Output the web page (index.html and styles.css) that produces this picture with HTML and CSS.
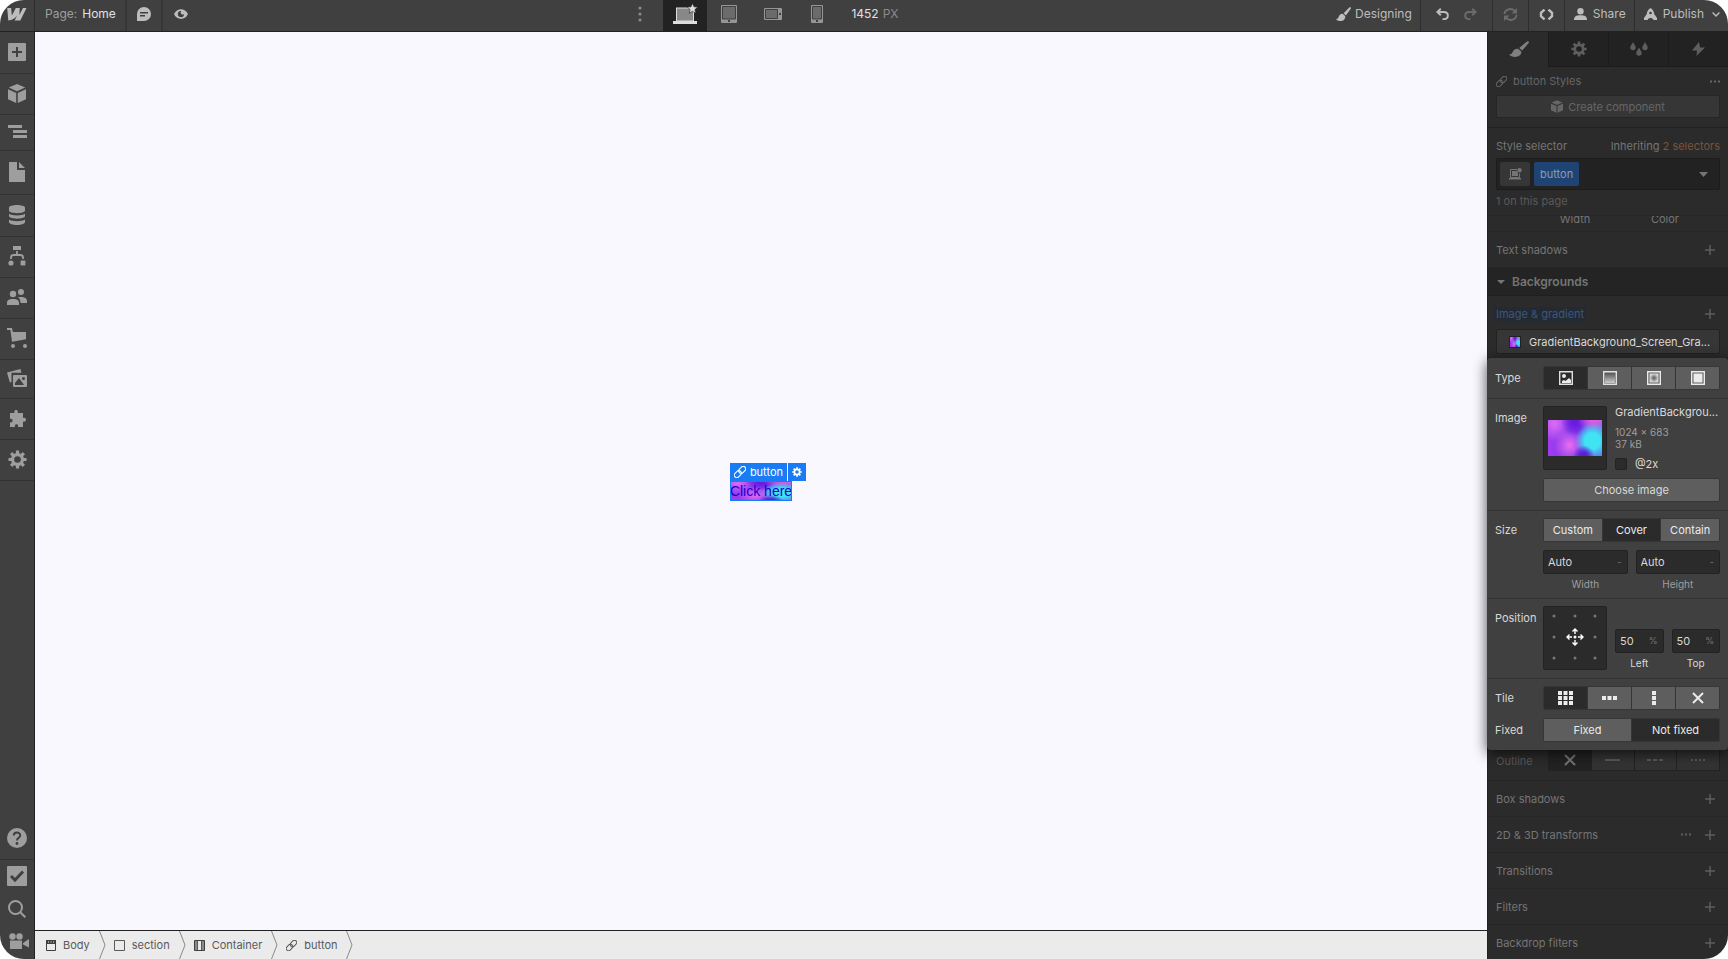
FILE: index.html
```
<!DOCTYPE html>
<html lang="en">

<head>
  <meta charset="UTF-8" />
  <meta name="viewport" content="width=device-width, initial-scale=1.0"/>
  <title>Designer - Home</title>
  <link rel="stylesheet" href="styles.css">
</head>

<body>
  <!-- Shared icons -->
  <svg class="sprite" aria-hidden="true">
    <symbol id="i-gear" viewBox="0 0 20 20">
      <circle cx="10" cy="10" r="5.2" fill="none" stroke="currentColor" stroke-width="3.4"/>
      <path d="M10 .5v4M10 15.5v4M.5 10h4M15.5 10h4M3.3 3.3l2.8 2.8M13.9 13.9l2.8 2.8M3.3 16.7l2.8-2.8M13.9 6.1l2.8-2.8" stroke="currentColor" stroke-width="3.4"/>
    </symbol>
    <symbol id="i-link" viewBox="0 0 12 12">
      <g fill="none" stroke="currentColor" stroke-width="1.1" transform="rotate(-45 6 6)">
        <rect x="-1" y="3.500" width="7.800" height="5" rx="2.500"/>
        <rect x="5.200" y="3.500" width="7.800" height="5" rx="2.500"/>
      </g>
    </symbol>
    <symbol id="i-cube" viewBox="0 0 18 19">
      <path d="M9 0l8.2 3.6L9 7.3.8 3.6zM0 5.3l8.2 3.6V19L0 15.200zM18 5.300L9.800 8.900V19l8.200-3.800z" fill="currentColor"/>
    </symbol>
    <symbol id="i-brush" viewBox="0 0 20 16">
      <path d="M19.500.4c.7.6.5 1.100.1 1.700l-6.400 7.500-3-2.500L17.700.7c.6-.6 1.200-.7 1.800-.3zM9.300 7.900l3 2.600c.4 3.300-2.800 5.500-6.300 5.500-2.500 0-4.700-.9-6-2.400 2.600 0 3-1.200 3.900-3C5 8.400 7.100 7.200 9.300 7.900z" fill="currentColor"/>
    </symbol>
    <symbol id="i-plus" viewBox="0 0 10 10">
      <path d="M5 0v10M0 5h10" stroke="currentColor" stroke-width="1.500"/>
    </symbol>
    <symbol id="i-dots" viewBox="0 0 10 3">
      <path d="M0 .5h2v2H0zM4 .5h2v2H4zM8 .5h2v2H8z" fill="currentColor"/>
    </symbol>
    <symbol id="i-cross" viewBox="0 0 12 12">
      <path d="M1 1l10 10M11 1L1 11" stroke="currentColor" stroke-width="2"/>
    </symbol>
    <symbol id="i-undo" viewBox="0 0 13 12">
      <path d="M4.800.7L1.300 4l3.500 3.300M1.500 4h6.300c5.400 0 5.400 7.200 0 7.200H6.500" fill="none" stroke="currentColor" stroke-width="1.900"/>
    </symbol>
    <linearGradient id="g-linear" x1="0" y1="0" x2="0" y2="1">
      <stop offset="0" stop-color="#555"/>
      <stop offset="1" stop-color="#ccc"/>
    </linearGradient>
    <radialGradient id="g-radial">
      <stop offset="0" stop-color="#555"/>
      <stop offset="1" stop-color="#ddd"/>
    </radialGradient>
  </svg>

  <div class="app">
    <header class="topbar">
      <div class="topbar-group">
        <button class="logo" aria-label="Menu">
          <svg width="20" height="13" viewBox="0 0 20 13"><path d="M19.500 0l-6.200 12.500H7.600l2.500-5C8 10.300 5 12.200 1.300 12.500L.2 0h3.900l.8 7.400L8.800 0h3.900l-.3 7L16 0z" fill="currentColor"/></svg>
        </button>
        <button class="page-btn">Page: <span>Home</span></button>
        <button class="icon-btn" aria-label="Comments">
          <svg width="14" height="14" viewBox="0 0 14 14"><path d="M7 0a7 7 0 0 1 0 14H0V7a7 7 0 0 1 7-7z" fill="currentColor"/><path d="M3 5.700h8M3 8.800h5" stroke="#404040" stroke-width="1.400"/></svg>
        </button>
        <button class="icon-btn" aria-label="Preview">
          <svg width="14" height="10" viewBox="0 0 14 10"><path d="M0 5c3-6.500 11-6.500 14 0-3 6.500-11 6.500-14 0z" fill="currentColor"/><path d="M7.300 2A3.100 3.100 0 1 0 10 5a2 2 0 0 1-2.700-3z" fill="#404040"/></svg>
        </button>
      </div>

      <div class="topbar-group">
        <button class="kebab" aria-label="More breakpoints">
          <svg width="4" height="16" viewBox="0 0 4 16"><g fill="currentColor"><circle cx="2" cy="2" r="1.600"/><circle cx="2" cy="8" r="1.600"/><circle cx="2" cy="14" r="1.600"/></g></svg>
        </button>
        <button class="device active" aria-label="Desktop">
          <svg width="26" height="22" viewBox="0 0 26 22"><rect x="4.500" y="5" width="17" height="13" fill="#888" stroke="#ddd"/><path d="M1 18h24v3H1z" fill="#ddd"/><path d="M20.500.3l1.500 3.500 3.700.3-2.800 2.500.9 3.700-3.300-2-3.200 2 .8-3.700-2.800-2.500 3.700-.3z" fill="#ddd" stroke="#222" stroke-width=".6"/></svg>
        </button>
        <button class="device" aria-label="Tablet">
          <svg width="16" height="18" viewBox="0 0 16 18"><rect width="16" height="18" rx="1" fill="#969696"/><path d="M1.500 1.500h13v12.500h-13z" fill="#6b6b6b" stroke="#404040"/><path d="M7 15h2v2H7z" fill="#404040"/></svg>
        </button>
        <button class="device" aria-label="Mobile landscape">
          <svg width="18" height="12" viewBox="0 0 18 12"><rect width="18" height="12" rx="1" fill="#969696"/><path d="M1.500 1.500h12v9h-12z" fill="#6b6b6b" stroke="#404040"/><path d="M15 5h2v2h-2z" fill="#404040"/></svg>
        </button>
        <button class="device" aria-label="Mobile portrait">
          <svg width="12" height="18" viewBox="0 0 12 18"><rect width="12" height="18" rx="1" fill="#969696"/><path d="M1.500 1.500h9v12.500h-9z" fill="#6b6b6b" stroke="#404040"/><path d="M5 15h2v2H5z" fill="#404040"/></svg>
        </button>
        <div class="canvas-width"><span>1452</span> PX</div>
      </div>

      <div class="topbar-group">
        <button class="text-btn">
          <svg width="15" height="14" viewBox="0 0 20 16" preserveAspectRatio="none"><use href="#i-brush"/></svg>
          Designing
        </button>
        <div class="history">
          <button aria-label="Undo"><svg width="13" height="12"><use href="#i-undo"/></svg></button>
          <button aria-label="Redo" disabled><svg class="flip" width="13" height="12"><use href="#i-undo"/></svg></button>
        </div>
        <button class="icon-btn dim" aria-label="Sync">
          <svg width="15" height="13" viewBox="0 0 15 13"><path d="M1.500 6C2 .5 9.500-.5 12 3.500M13.500 7C13 12.500 5.500 13.500 3 9.500" fill="none" stroke="currentColor" stroke-width="2"/><path d="M14 0v5.500H8.500zM1 13V7.500h5.500z" fill="currentColor"/></svg>
        </button>
        <button class="icon-btn" aria-label="Export code">
          <svg width="15" height="11" viewBox="0 0 15 11"><path d="M5.500.6L2 3.800v3.400l3.500 3.200M9.500.6L13 3.800v3.400l-3.500 3.200" fill="none" stroke="currentColor" stroke-width="2.400"/></svg>
        </button>
        <button class="text-btn share">
          <svg width="13" height="12" viewBox="0 0 13 12"><circle cx="6.500" cy="3.200" r="3.200" fill="currentColor"/><path d="M0 12c0-3.500 2-4.800 6.500-4.800S13 8.500 13 12z" fill="currentColor"/></svg>
          Share
        </button>
        <button class="text-btn publish">
          <svg width="13" height="12" viewBox="0 0 13 12"><path d="M6.500 0C9 1.500 10 3.500 10.200 6l2.800 4v2h-3.500l-1-1.500h-4L3.500 12H0v-2l2.800-4C3 3.500 4 1.500 6.500 0z" fill="currentColor"/><circle cx="6.500" cy="5" r="1.300" fill="#404040"/><path d="M5.500 10h2v2h-2z" fill="#404040"/></svg>
          Publish
          <svg class="chevron" width="8" height="5" viewBox="0 0 8 5"><path d="M.6.600L4 4 7.400.600" fill="none" stroke="currentColor" stroke-width="1.400"/></svg>
        </button>
      </div>
    </header>

    <nav class="sidebar" aria-label="Tools">
      <button class="tool h42" aria-label="Add"><svg width="18" height="18" viewBox="0 0 18 18"><rect width="18" height="18" rx="1" fill="currentColor"/><path d="M9 4v10M4 9h10" stroke="#404040" stroke-width="2"/></svg></button>
      <button class="tool" aria-label="Components"><svg width="18" height="19"><use href="#i-cube"/></svg></button>
      <button class="tool h36" aria-label="Navigator"><svg width="19" height="13" viewBox="0 0 19 13"><path d="M0 0h14v3H0zM5 5h14v3H5zM5 10h14v3H5z" fill="currentColor"/></svg></button>
      <button class="tool h44" aria-label="Pages"><svg width="16" height="20" viewBox="0 0 16 20"><path d="M0 0h8v8h8v12H0zM10 0l6 6h-6z" fill="currentColor"/></svg></button>
      <button class="tool h42" aria-label="CMS"><svg width="16" height="20" viewBox="0 0 16 20"><path d="M0 2.800C0-.9 16-.9 16 2.800v2.700C16 9 0 9 0 5.500zM0 8.800c3 2.200 13 2.200 16 0V11c0 3.500-16 3.500-16 0zM0 14.600c3 2.200 13 2.200 16 0V17c0 4-16 4-16 0z" fill="currentColor"/></svg></button>
      <button class="tool" aria-label="Logic"><svg width="18" height="20" viewBox="0 0 18 20"><path d="M5 0h8v4H5z" fill="currentColor"/><path d="M9 5v4M3 13V11.500Q3 9 5.500 9h7Q15 9 15 11.500V13" fill="none" stroke="currentColor" stroke-width="1.800"/><circle cx="3" cy="17" r="2.600" fill="currentColor"/><path d="M13 15l4 4M17 15l-4 4" stroke="currentColor" stroke-width="2.600"/></svg></button>
      <button class="tool" aria-label="Users"><svg width="20" height="16" viewBox="0 0 20 16"><g fill="currentColor"><circle cx="6" cy="5" r="3.200"/><circle cx="14" cy="3" r="3"/><path d="M0 16v-2c0-3 2-4 6-4s6 1 6 4v2zM11 8.200c5-.8 9 .3 9 3.800v2h-6.500c0-3-.8-4.700-2.500-5.800z"/></g></svg></button>
      <button class="tool" aria-label="Ecommerce"><svg width="20" height="20" viewBox="0 0 20 20"><path d="M0 0h5l.8 4H19v7.200L5 13.800 3.400 2H0z" fill="currentColor"/><circle cx="6" cy="18" r="2" fill="currentColor"/><circle cx="18" cy="18" r="2" fill="currentColor"/></svg></button>
      <button class="tool h39" aria-label="Assets"><svg width="20" height="18" viewBox="0 0 20 18"><path d="M0 3.400L13.500 0l.9 3.800H4.500v9.500H2.800z" fill="currentColor"/><rect x="6" y="6" width="14" height="12" rx="1" fill="currentColor"/><path d="M8 16v-2l4-5 5 7z" fill="#404040"/><circle cx="16.500" cy="9.500" r="1.500" fill="#404040"/></svg></button>
      <button class="tool" aria-label="Apps"><svg width="17" height="17" viewBox="0 0 17 17"><path d="M1 3h4.500C4.200-.9 9.800-.9 8.700 3H14v5c4-1.200 4 4.800 0 3.500V17H9c1-3.800-4-3.800-3 0H1v-4.500c3.500.7 3.500-4.500 0-3.800z" fill="currentColor"/></svg></button>
      <button class="tool" aria-label="Settings"><svg width="19" height="19"><use href="#i-gear"/></svg></button>

      <div class="sidebar-bottom">
        <button class="tool" aria-label="Help"><svg width="20" height="20" viewBox="0 0 20 20"><circle cx="10" cy="10" r="10" fill="currentColor"/><path d="M6.800 7.600c0-4.100 6.400-4 6.400-.2 0 2.500-3.200 2.300-3.200 5" fill="none" stroke="#404040" stroke-width="2"/><circle cx="10" cy="15.500" r="1.400" fill="#404040"/></svg></button>
        <button class="tool plain" aria-label="Audit"><svg width="20" height="20" viewBox="0 0 20 20"><rect width="20" height="20" rx="1" fill="currentColor"/><path d="M4 10l4 4 8-8.500" fill="none" stroke="#404040" stroke-width="3"/></svg></button>
        <button class="tool plain" aria-label="Search"><svg width="18" height="18" viewBox="0 0 18 18"><circle cx="7.500" cy="7.500" r="6.500" fill="none" stroke="currentColor" stroke-width="2"/><path d="M12 12l5.300 5.300" stroke="currentColor" stroke-width="2"/></svg></button>
        <button class="tool plain camera" aria-label="Video tutorials"><svg width="20" height="16" viewBox="0 0 20 16"><g fill="currentColor"><circle cx="3.500" cy="3.500" r="3.200"/><circle cx="10.500" cy="3.500" r="3.200"/><path d="M1 7.500h12V16H1zM14 10l6-4v8.500l-6-3z"/></g></svg></button>
      </div>
    </nav>

    <main class="canvas">
      <div class="selected">
        <div class="element-label">
          <span><svg width="12" height="12"><use href="#i-link"/></svg>button</span>
          <button aria-label="Element settings"><svg width="10" height="10"><use href="#i-gear"/></svg></button>
        </div>
        <a href="#" class="element-link gradient-image">Click here</a>
      </div>
    </main>

    <footer class="breadcrumbs">
      <a href="#"><svg width="10" height="11" viewBox="0 0 10 11"><path d="M.5 1v9.500h9V1" fill="none" stroke="#404040"/><path d="M0 0h10v4H0z" fill="#404040"/><path d="M2 2h1M4.500 2h1M7 2h1" stroke="#ebebeb"/></svg>Body</a>
      <svg class="sep" width="7" height="28" viewBox="0 0 7 28"><path d="M.5 0l5.500 14L.5 28" fill="none" stroke="#8a8a8a"/></svg>
      <a href="#"><svg width="11" height="11" viewBox="0 0 11 11"><path d="M.5.500h10v10H.5z" fill="none" stroke="#5a5a5a"/></svg>section</a>
      <svg class="sep" width="7" height="28" viewBox="0 0 7 28"><path d="M.5 0l5.500 14L.5 28" fill="none" stroke="#8a8a8a"/></svg>
      <a href="#"><svg width="11" height="11" viewBox="0 0 11 11"><path d="M.5.500h10v10H.5z" fill="#8a8a8a" stroke="#404040"/><path d="M4 1h3v9H4z" fill="#ebebeb"/><path d="M3.500 1v9M7.500 1v9" stroke="#5a5a5a"/></svg>Container</a>
      <svg class="sep" width="7" height="28" viewBox="0 0 7 28"><path d="M.5 0l5.500 14L.5 28" fill="none" stroke="#8a8a8a"/></svg>
      <a href="#"><svg width="11" height="11"><use href="#i-link"/></svg>button</a>
      <svg class="sep" width="7" height="28" viewBox="0 0 7 28"><path d="M.5 0l5.500 14L.5 28" fill="none" stroke="#8a8a8a"/></svg>
    </footer>

    <aside class="panel">
      <div class="tabs">
        <button class="active" aria-label="Style"><svg width="20" height="16"><use href="#i-brush"/></svg></button>
        <button aria-label="Settings"><svg width="16" height="16"><use href="#i-gear"/></svg></button>
        <button aria-label="Style manager"><svg width="18" height="14" viewBox="0 0 18 14"><path id="drop" d="M3 0c1.500 3 2.700 3.800 2.700 5.500a2.700 2.700 0 0 1-5.400 0C.3 3.800 1.500 3 3 0z" fill="currentColor"/><use href="#drop" x="6" y="5.500"/><use href="#drop" x="12"/></svg></button>
        <button aria-label="Interactions"><svg width="13" height="14" viewBox="0 0 13 14"><path d="M7 0L0 8.500h5L4.500 14 13 5.500H8z" fill="currentColor"/></svg></button>
      </div>

      <div class="panel-head">
        <div class="row">
          <svg width="11" height="11"><use href="#i-link"/></svg>
          <span class="grow">button Styles</span>
          <button class="bare" aria-label="More"><svg width="10" height="3"><use href="#i-dots"/></svg></button>
        </div>
        <button class="create-btn"><svg width="12" height="13"><use href="#i-cube"/></svg>Create component</button>
      </div>

      <div class="selector">
        <div class="row">
          <span class="grow">Style selector</span>
          <span>Inheriting <a href="#">2 selectors</a></span>
        </div>
        <div class="selector-box">
          <button class="state-btn" aria-label="Base state"><svg width="13" height="12" viewBox="0 0 13 12"><path d="M8 1.500H1.500v8h9V5.500" fill="none" stroke="currentColor"/><path d="M3 3h5l1 2v3H3zM0 10h12v1.500H0z" fill="currentColor"/><circle cx="10.500" cy="2.300" r="2.200" fill="currentColor"/></svg></button>
          <button class="tag">button</button>
          <button class="bare arrow" aria-label="Choose selector"><svg width="9" height="5" viewBox="0 0 9 5"><path d="M0 0h9L4.500 5z" fill="currentColor"/></svg></button>
        </div>
        <div class="muted">1 on this page</div>
      </div>

      <div class="clipped"><span>Width</span><span>Color</span></div>

      <div class="row prop-row"><span class="grow">Text shadows</span><button class="bare" aria-label="Add text shadow"><svg width="10" height="10"><use href="#i-plus"/></svg></button></div>

      <button class="section-title"><svg width="8" height="4" viewBox="0 0 8 4"><path d="M0 0h8L4 4z" fill="currentColor"/></svg>Backgrounds</button>

      <div class="row prop-row"><span class="grow"><span class="highlight">Image &amp; gradient</span></span><button class="bare" aria-label="Add background"><svg width="10" height="10"><use href="#i-plus"/></svg></button></div>
      <button class="layer"><span class="swatch gradient-image"></span>GradientBackground_Screen_Gra...</button>

      <div class="popup">
        <section>
          <span class="label">Type</span>
          <div class="segment">
            <button class="active" aria-label="Image"><svg width="14" height="14" viewBox="0 0 14 14"><path d="M.7.700h12.600v12.600H.7z" fill="none" stroke="#e0e0e0" stroke-width="1.400"/><circle cx="5" cy="5" r="2" fill="#ebebeb"/><path d="M3 12v-2l2-1 1.500 1L10 7l2 2v3z" fill="#ebebeb"/></svg></button>
            <button aria-label="Linear gradient"><svg width="14" height="14" viewBox="0 0 14 14"><path d="M.7.700h12.600v12.600H.7z" fill="none" stroke="#e0e0e0" stroke-width="1.400"/><path d="M2 2h10v10H2z" fill="url(#g-linear)"/></svg></button>
            <button aria-label="Radial gradient"><svg width="14" height="14" viewBox="0 0 14 14"><path d="M.7.700h12.600v12.600H.7z" fill="none" stroke="#ebebeb" stroke-width="1.400"/><path d="M2.500 2.500h9v9h-9z" fill="url(#g-radial)"/></svg></button>
            <button aria-label="Color overlay"><svg width="14" height="14" viewBox="0 0 14 14"><path d="M.7.700h12.600v12.600H.7z" fill="none" stroke="#ebebeb" stroke-width="1.400"/><path d="M2.500 2.500h9v9h-9z" fill="#ebebeb"/></svg></button>
          </div>
        </section>

        <section>
          <span class="label">Image</span>
          <div class="stack">
            <div class="image-row">
              <div class="thumb"><div class="gradient-image"></div></div>
              <div class="image-info">
                <div>GradientBackgrou...</div>
                <p>1024 × 683<br>37 kB</p>
                <label><input type="checkbox">@2x</label>
              </div>
            </div>
            <button class="choose-btn">Choose image</button>
          </div>
        </section>

        <section>
          <span class="label">Size</span>
          <div class="stack">
            <div class="segment">
              <button>Custom</button>
              <button class="active">Cover</button>
              <button>Contain</button>
            </div>
            <div class="fields">
              <div class="field">
                <div class="box"><input type="text" id="bg-width" value="Auto"><span>-</span></div>
                <label for="bg-width">Width</label>
              </div>
              <div class="field">
                <div class="box"><input type="text" id="bg-height" value="Auto"><span>-</span></div>
                <label for="bg-height">Height</label>
              </div>
            </div>
          </div>
        </section>

        <section>
          <span class="label">Position</span>
          <div class="position-row">
            <button class="origin" aria-label="Position origin">
              <svg width="62" height="62" viewBox="0 0 62 62"><g fill="#777"><circle cx="10" cy="9" r="1.500"/><circle cx="31" cy="9" r="1.500"/><circle cx="51" cy="9" r="1.500"/><circle cx="10" cy="30" r="1.500"/><circle cx="51" cy="30" r="1.500"/><circle cx="10" cy="51" r="1.500"/><circle cx="31" cy="51" r="1.500"/><circle cx="51" cy="51" r="1.500"/></g><g fill="none" stroke="#fff" stroke-width="1.400"><path d="M31 27v-5M31 33v5M28 30h-5M34 30h5M28.500 24.500L31 22l2.500 2.500M28.500 35.500L31 38l2.500-2.500M25.500 27.500L23 30l2.500 2.500M36.500 27.500L39 30l-2.500 2.500"/></g><circle cx="31" cy="30" r="1.500" fill="#fff"/></svg>
            </button>
            <div class="field bright">
              <div class="box"><input type="text" id="bg-left" value="50"><span>%</span></div>
              <label for="bg-left">Left</label>
            </div>
            <div class="field bright">
              <div class="box"><input type="text" id="bg-top" value="50"><span>%</span></div>
              <label for="bg-top">Top</label>
            </div>
          </div>
        </section>

        <section>
          <span class="label">Tile</span>
          <div class="segment">
            <button class="active" aria-label="Tile both"><svg width="15" height="14" viewBox="0 0 15 14"><path d="M0 0h4v4H0zM5.500 0h4v4h-4zM11 0h4v4h-4zM0 5h4v4H0zM5.500 5h4v4h-4zM11 5h4v4h-4zM0 10h4v4H0zM5.500 10h4v4h-4zM11 10h4v4h-4z" fill="currentColor"/></svg></button>
            <button aria-label="Tile horizontally"><svg width="15" height="4" viewBox="0 0 15 4"><path d="M0 0h4v4H0zM5.500 0h4v4h-4zM11 0h4v4h-4z" fill="currentColor"/></svg></button>
            <button aria-label="Tile vertically"><svg width="4" height="14" viewBox="0 0 4 14"><path d="M0 0h4v4H0zM0 5h4v4H0zM0 10h4v4H0z" fill="currentColor"/></svg></button>
            <button aria-label="No tile"><svg width="12" height="12"><use href="#i-cross"/></svg></button>
          </div>
          <span class="label">Fixed</span>
          <div class="segment">
            <button>Fixed</button>
            <button class="active">Not fixed</button>
          </div>
        </section>
      </div>

      <div class="row outline-row">
        <span class="grow">Outline</span>
        <div class="outline-types">
          <button class="active" aria-label="None"><svg width="12" height="12"><use href="#i-cross"/></svg></button>
          <button aria-label="Solid"><svg width="15" height="2" viewBox="0 0 15 2"><path d="M0 1h15" stroke="currentColor" stroke-width="2"/></svg></button>
          <button aria-label="Dashed"><svg width="16" height="2" viewBox="0 0 16 2"><path d="M0 1h16" stroke="currentColor" stroke-width="2" stroke-dasharray="4 2"/></svg></button>
          <button aria-label="Dotted"><svg width="14" height="2" viewBox="0 0 14 2"><path d="M0 1h14" stroke="currentColor" stroke-width="2" stroke-dasharray="2 2"/></svg></button>
        </div>
      </div>
      <div class="row prop-row"><span class="grow">Box shadows</span><button class="bare" aria-label="Add box shadow"><svg width="10" height="10"><use href="#i-plus"/></svg></button></div>
      <div class="row prop-row"><span class="grow">2D &amp; 3D transforms</span><button class="bare" aria-label="Transform settings"><svg width="10" height="3"><use href="#i-dots"/></svg></button><button class="bare" aria-label="Add transform"><svg width="10" height="10"><use href="#i-plus"/></svg></button></div>
      <div class="row prop-row"><span class="grow">Transitions</span><button class="bare" aria-label="Add transition"><svg width="10" height="10"><use href="#i-plus"/></svg></button></div>
      <div class="row prop-row"><span class="grow">Filters</span><button class="bare" aria-label="Add filter"><svg width="10" height="10"><use href="#i-plus"/></svg></button></div>
      <div class="row prop-row"><span class="grow">Backdrop filters</span><button class="bare" aria-label="Add backdrop filter"><svg width="10" height="10"><use href="#i-plus"/></svg></button></div>
    </aside>
  </div>
</body>
</html>
```

FILE: styles.css
```
* {
  box-sizing: border-box;
}

body {
  margin: 0;
  background-color: #fff;
  font-family: Inter, "Liberation Sans", sans-serif;
  font-size: 11px;
  line-height: 16px;
  color: #d9d9d9;
}

button,
input {
  margin: 0;
  padding: 0;
  border: none;
  background: none;
  font: inherit;
  color: inherit;
}

button {
  display: flex;
  align-items: center;
  justify-content: center;
  cursor: pointer;
}

a {
  color: inherit;
  text-decoration: none;
}

p {
  margin: 0;
}

svg {
  display: block;
  flex: none;
}

.sprite {
  position: absolute;
  width: 0;
  height: 0;
}

.app {
  display: grid;
  grid-template-columns: 35px minmax(0, 1fr) 241px;
  grid-template-rows: 32px minmax(0, 1fr) 29px;
  height: 100vh;
  border-radius: 24px;
  overflow: hidden;
}

.gradient-image {
  background:
    radial-gradient(20% 30% at 66% 100%, #5b1fd8 30%, rgba(91, 31, 216, 0)),
    radial-gradient(32% 50% at 82% 58%, #3fe3f2 45%, rgba(69, 205, 240, 0)),
    radial-gradient(30% 35% at 85% 0%, #e65be0 10%, rgba(230, 91, 224, 0)),
    radial-gradient(26% 40% at 50% 5%, #6a1be0 20%, rgba(106, 27, 224, 0)),
    radial-gradient(28% 45% at 40% 70%, #e06af0 10%, rgba(224, 106, 240, 0)),
    radial-gradient(30% 50% at 12% 10%, #d768f2 10%, rgba(215, 104, 242, 0)),
    linear-gradient(90deg, #a03cf0, #7a3ae8 60%, #5f7bf0);
}

/* Top bar */
.topbar {
  grid-column: 1 / -1;
  display: flex;
  justify-content: space-between;
  background-color: #404040;
  border-bottom: 1px solid #222;
  font-size: 12px;
  color: #bdbdbd;
}

.topbar-group {
  display: flex;
}

.topbar-group > button,
.history {
  padding-bottom: 3px;
}

.logo {
  width: 35px;
  border-right: 1px solid #2e2e2e;
}

.page-btn {
  gap: 5px;
  padding: 0 9px 0 10px;
  border-right: 2px solid #363636;
  color: #9e9e9e;
}

.page-btn span {
  color: #e0e0e0;
}

.icon-btn {
  width: 36px;
  border-right: 2px solid #363636;
}

.icon-btn:last-child {
  border-right: none;
}

.kebab {
  width: 24px;
  margin-right: 11px;
  color: #8a8a8a;
}

.device {
  width: 44px;
}

.device.active {
  background-color: #222;
}

.canvas-width {
  display: flex;
  align-items: center;
  gap: 4px;
  padding: 0 0 3px 12px;
  color: #8a8a8a;
}

.canvas-width span {
  color: #e0e0e0;
}

.text-btn {
  gap: 4px;
  padding: 0 8px;
  border-right: 1px solid #2e2e2e;
}

.topbar-group:last-child .icon-btn {
  border-right: 1px solid #2e2e2e;
}

.topbar-group .dim,
.history button:disabled {
  color: #6b6b6b;
}

.history {
  display: flex;
  gap: 15px;
  padding-left: 15px;
  padding-right: 15px;
  border-right: 1px solid #2e2e2e;
}

.flip {
  transform: scaleX(-1);
}

.share {
  gap: 6px;
  padding-left: 9px;
}

.publish {
  gap: 6px;
  padding-left: 9px;
  border-right: none;
}

.chevron {
  margin-left: 2px;
}

/* Left tools */
.sidebar {
  grid-row: 2 / 4;
  display: flex;
  flex-direction: column;
  background-color: #404040;
  border-right: 1px solid #222;
  color: #9e9e9e;
}

.tool {
  width: 100%;
  height: 41px;
  flex: none;
  padding-bottom: 2px;
  border-bottom: 1px solid #333;
}

.h36 {
  height: 36px;
}

.h39 {
  height: 39px;
}

.h42 {
  height: 42px;
}

.h44 {
  height: 44px;
}

.sidebar-bottom {
  margin-top: auto;
}

.plain {
  height: 33px;
  border-bottom: none;
}

.camera {
  padding: 0 0 4px 4px;
}

/* Canvas */
.canvas {
  display: flex;
  align-items: center;
  justify-content: center;
  padding-top: 20px;
  background-color: #faf8ff;
}

.selected {
  position: relative;
}

.element-label {
  position: absolute;
  left: 0;
  bottom: 100%;
  display: flex;
  gap: 1px;
  color: #fff;
}

.element-label span,
.element-label button {
  display: flex;
  align-items: center;
  gap: 4px;
  height: 18px;
  padding: 0 4px;
  background-color: #1a7cf5;
}

.element-link {
  display: block;
  outline: 1px solid #1a7cf5;
  outline-offset: -1px;
  font: 14px/20px "Liberation Sans", Arial, sans-serif;
  color: #1a00d0;
}

/* Breadcrumbs */
.breadcrumbs {
  grid-column: 2;
  grid-row: 3;
  display: flex;
  padding-left: 3px;
  background-color: #ebebeb;
  border-top: 1px solid #222;
  color: #5a5a5a;
}

.breadcrumbs a {
  display: flex;
  align-items: center;
  gap: 7px;
  padding: 0 9px 0 8px;
}

/* Style panel */
.panel {
  grid-column: 3;
  grid-row: 2 / 4;
  display: flex;
  flex-direction: column;
  background-color: #2b2b2b;
  border-left: 1px solid #222;
  color: #757575;
}

.panel > * {
  flex: none;
}

.tabs {
  display: grid;
  grid-template-columns: repeat(4, 1fr);
}

.tabs button {
  height: 35px;
  background-color: #222;
  border-left: 1px solid #1c1c1c;
  border-bottom: 1px solid #1c1c1c;
  color: #5e5e5e;
}

.tabs .active {
  background: none;
  border-color: transparent;
  color: #808080;
}

.row {
  display: flex;
  align-items: center;
  gap: 6px;
}

.grow {
  flex: 1;
}

.panel-head {
  padding: 6px 8px 9px;
  border-bottom: 1px solid #222;
  color: #666;
}

.create-btn {
  gap: 5px;
  width: 100%;
  height: 23px;
  margin-top: 6px;
  background-color: #363636;
  border: 1px solid #262626;
  border-radius: 2px;
}

.selector {
  padding: 10px 8px 6px;
  border-bottom: 1px solid #262626;
}

.selector .row a {
  color: #7a543a;
}

.selector-box {
  display: flex;
  align-items: center;
  gap: 4px;
  height: 32px;
  margin: 4px 0 3px;
  padding: 0 11px 0 3px;
  background-color: #222;
  border: 1px solid #1c1c1c;
  border-radius: 2px;
}

.state-btn,
.tag {
  height: 24px;
  border-radius: 2px;
}

.state-btn {
  width: 30px;
  background-color: #363636;
}

.tag {
  padding: 0 6px;
  background-color: #1f4473;
  color: #8a9db5;
}

.arrow {
  margin-left: auto;
}

.muted {
  color: #595959;
}

/* Labels scrolled half under the selector block */
.clipped {
  display: grid;
  grid-template-columns: 1fr 1fr;
  height: 16px;
  padding-left: 42px;
  padding-right: 18px;
  border-bottom: 1px solid #262626;
  overflow: hidden;
  line-height: 6px;
  text-align: center;
}

.prop-row {
  height: 36px;
  padding: 0 13px 0 8px;
  gap: 14px;
  border-bottom: 1px solid #262626;
}

.prop-row .bare {
  color: #5e5e5e;
}

.section-title {
  justify-content: flex-start;
  gap: 7px;
  height: 28px;
  padding-left: 9px;
  background-color: #242424;
  border-bottom: 1px solid #1f1f1f;
  font-size: 12px;
  font-weight: 600;
}

.section-title + .prop-row {
  height: 33px;
  padding-top: 3px;
  border-bottom: none;
}

.highlight {
  margin-left: -2px;
  padding: 0 2px;
  background-color: #232a34;
  border-radius: 2px;
  color: #3e5678;
}

.layer {
  justify-content: flex-start;
  gap: 8px;
  height: 25px;
  margin: 0 8px 4px;
  padding-left: 12px;
  background-color: #363636;
  border: 1px solid #222;
  border-radius: 2px;
  color: #d9d9d9;
  white-space: nowrap;
}

.swatch {
  flex: none;
  width: 12px;
  height: 12px;
  border: 1px solid #222;
}

/* Background popup */
.popup {
  position: relative;
  margin-left: -1px;
  background-color: #404040;
  border-radius: 4px;
  box-shadow: 0 3px 14px rgba(0, 0, 0, 0.7);
  color: #d9d9d9;
}

.popup section {
  display: grid;
  grid-template-columns: 48px minmax(0, 1fr);
  row-gap: 8px;
  padding: 7px 8px 8px;
  border-bottom: 1px solid #333;
}

.popup section:first-child {
  padding-top: 8px;
}

.popup section:last-child {
  border-bottom: none;
}

.label {
  padding-top: 4px;
}

.stack {
  display: flex;
  flex-direction: column;
  gap: 8px;
}

.segment {
  display: flex;
  height: 24px;
  gap: 1px;
  padding: 1px;
  background-color: #363636;
  border-radius: 2px;
}

.segment button {
  flex: 1 1 0;
  background-color: #5e5e5e;
  color: #ebebeb;
}

.segment .active {
  background-color: #2b2b2b;
}

.image-row,
.position-row,
.fields {
  display: flex;
  gap: 8px;
}

.thumb,
.origin {
  display: flex;
  align-items: center;
  flex: none;
  width: 64px;
  height: 64px;
  background-color: #2b2b2b;
  border: 1px solid #222;
  border-radius: 2px;
}

.thumb {
  justify-content: center;
}

.thumb div {
  width: 54px;
  height: 36px;
}

.image-info {
  display: flex;
  flex-direction: column;
  justify-content: space-between;
  line-height: 12px;
  white-space: nowrap;
}

.image-info p {
  font-size: 10px;
  color: #9e9e9e;
}

.image-info label {
  display: flex;
  align-items: center;
  gap: 8px;
}

.image-info input {
  appearance: none;
  width: 12px;
  height: 12px;
  background-color: #2b2b2b;
  border: 1px solid #222;
  border-radius: 2px;
}

.choose-btn {
  height: 24px;
  background-color: #5e5e5e;
  border: 1px solid #363636;
  border-radius: 2px;
}

.field {
  flex: 1;
  min-width: 0;
  font-size: 10px;
  text-align: center;
  color: #9e9e9e;
}

.fields {
  margin-bottom: -2px;
}

.box {
  display: flex;
  align-items: center;
  height: 24px;
  margin-bottom: 2px;
  padding: 0 5px 0 4px;
  background-color: #2b2b2b;
  border: 1px solid #222;
  border-radius: 2px;
}

.box input {
  flex: 1;
  width: 0;
  min-width: 0;
  font-size: 11px;
  color: #d9d9d9;
}

.box span {
  font-size: 9px;
  color: #757575;
}

.bright {
  align-self: flex-end;
  margin-bottom: -1px;
  color: #d9d9d9;
}

/* Outline row runs up under the popup */
.outline-row {
  height: 31px;
  padding: 0 8px 9px;
  border-bottom: 1px solid #262626;
  color: #595959;
}

.outline-types {
  display: flex;
  align-self: stretch;
  gap: 1px;
  width: 172px;
  padding: 0 1px 1px;
  background-color: #222;
}

.outline-types button {
  flex: 1;
  background-color: #333;
}

.outline-types .active {
  background-color: #222;
  color: #757575;
}
```
